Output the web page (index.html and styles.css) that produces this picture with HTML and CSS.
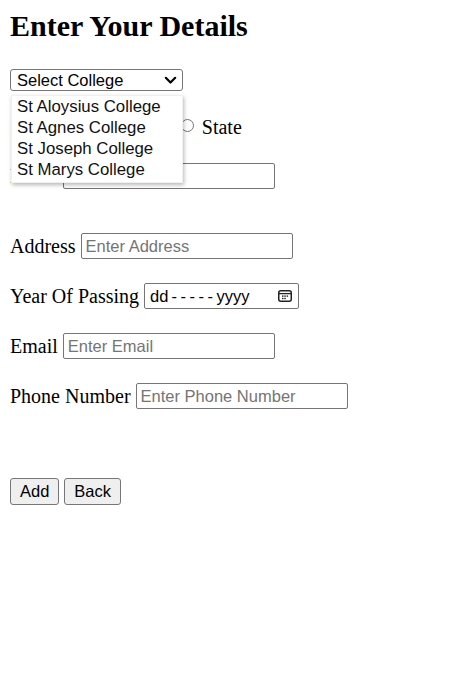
FILE: index.html
```html
<!DOCTYPE html>
<html lang="en">
<head>
<meta charset="utf-8">
<title>Enter Your Details</title>
<link rel="stylesheet" href="styles.css">
</head>
<body>
<h1 class="title">Enter Your Details</h1>
<form class="form">
  <div class="select-wrap">
    <select class="college">
      <option>Select College</option>
      <option>St Aloysius College</option>
      <option>St Agnes College</option>
      <option>St Joseph College</option>
      <option>St Marys College</option>
    </select>
    <svg class="chevron" width="13" height="9" viewBox="0 0 13 9" aria-hidden="true">
      <path d="M1.8 1.8 L6.5 6.5 L11.2 1.8" fill="none" stroke="#000" stroke-width="2.2" stroke-linecap="round" stroke-linejoin="round"/>
    </svg>
    <ul class="dropdown">
      <li class="dropdown-item">St Aloysius College</li>
      <li class="dropdown-item">St Agnes College</li>
      <li class="dropdown-item">St Joseph College</li>
      <li class="dropdown-item">St Marys College</li>
    </ul>
  </div>

  <div class="radio-row">Syllabus <input class="radio" type="radio" name="board"> Central <input class="radio radio-state" type="radio" name="board"> State</div>

  <div class="field field-name">
    <label class="label">Name</label>
    <input class="text-input" type="text" placeholder="Enter Name">
  </div>

  <div class="field field-address">
    <label class="label">Address</label>
    <input class="text-input" type="text" placeholder="Enter Address">
  </div>

  <div class="field">
    <label class="label">Year Of Passing</label>
    <div class="date-input">
      <span class="date-text">dd<span class="date-dashes">-----</span>yyyy</span>
      <svg class="cal-icon" width="14" height="12" viewBox="0 0 14 12" aria-hidden="true">
        <rect x="0.75" y="0.75" width="12.5" height="10.5" rx="2" fill="none" stroke="#222" stroke-width="1.5"/>
        <line x1="1" y1="3.6" x2="13" y2="3.6" stroke="#222" stroke-width="1.3"/>
        <rect x="4" y="5.4" width="1.5" height="1.4" fill="#222"/>
        <rect x="6.3" y="5.4" width="1.5" height="1.4" fill="#222"/>
        <rect x="8.6" y="5.4" width="1.5" height="1.4" fill="#222"/>
        <rect x="4" y="7.8" width="1.5" height="1.4" fill="#222"/>
        <rect x="6.3" y="7.8" width="1.5" height="1.4" fill="#222"/>
      </svg>
    </div>
  </div>

  <div class="field">
    <label class="label">Email</label>
    <input class="text-input" type="email" placeholder="Enter Email">
  </div>

  <div class="field">
    <label class="label">Phone Number</label>
    <input class="text-input" type="tel" placeholder="Enter Phone Number">
  </div>

  <div class="buttons">
    <button class="btn" type="button">Add</button>
    <button class="btn" type="button">Back</button>
  </div>
</form>
</body>
</html>
```
FILE: styles.css
```css
html, body {
  background: #fff;
}
body {
  margin: 0;
  padding: 0 10px;
  font-family: "Liberation Serif", "Times New Roman", serif;
  color: #000;
}
.title {
  margin: 8px 0 0;
  font-size: 30px;
  line-height: 36px;
  font-weight: bold;
}
.form {
  display: flex;
  flex-direction: column;
  align-items: flex-start;
  margin-top: 25px;
}
.select-wrap {
  position: relative;
  height: 22px;
}
.college {
  -webkit-appearance: none;
  -moz-appearance: none;
  appearance: none;
  box-sizing: border-box;
  width: 173px;
  height: 22px;
  margin: 0;
  padding: 0 20px 0 6px;
  font-family: "Liberation Sans", Arial, sans-serif;
  font-size: 16.5px;
  color: #000;
  background: #fff;
  border: 1px solid #767676;
  border-radius: 3px;
}
.chevron {
  position: absolute;
  left: 154px;
  top: 7px;
  pointer-events: none;
}
.dropdown {
  position: absolute;
  left: 1px;
  top: 26px;
  z-index: 10;
  box-sizing: border-box;
  width: 172px;
  height: 88px;
  margin: 0;
  padding: 0;
  list-style: none;
  background: #fff;
  border: 1px solid rgba(0, 0, 0, 0.06);
  box-shadow: 1px 2px 4px rgba(0, 0, 0, 0.28);
}
.dropdown-item {
  height: 21px;
  line-height: 21px;
  padding-left: 5px;
  font-family: "Liberation Sans", Arial, sans-serif;
  font-size: 16.8px;
  color: #111;
  white-space: nowrap;
}
.radio-row {
  margin-top: 23px;
  height: 26px;
  line-height: 26px;
  font-size: 20px;
}
.radio {
  width: 13px;
  height: 13px;
  margin: 3px 3px 0 5px;
  vertical-align: 2px;
}
.radio-state {
  margin-left: 7px;
}
.field {
  display: flex;
  align-items: center;
  gap: 5px;
  height: 26px;
  margin-top: 24px;
}
.field-name {
  margin-top: 23px;
}
.field-address {
  margin-top: 44px;
}
.label {
  font-size: 20px;
  white-space: nowrap;
}
.text-input {
  box-sizing: border-box;
  width: 212px;
  height: 26px;
  margin: 0;
  padding: 1px 4px;
  font-family: "Liberation Sans", Arial, sans-serif;
  font-size: 16.5px;
  color: #000;
  background: #fff;
  border: 1px solid #767676;
  border-radius: 2px;
}
.text-input::placeholder {
  color: #757575;
}
.date-input {
  box-sizing: border-box;
  display: flex;
  align-items: center;
  justify-content: space-between;
  width: 155px;
  height: 26px;
  padding: 0 6px 0 5px;
  background: #fff;
  border: 1px solid #767676;
  border-radius: 2px;
  font-family: "Liberation Sans", Arial, sans-serif;
  font-size: 16.5px;
  color: #000;
}
.date-text {
  white-space: nowrap;
}
.date-dashes {
  letter-spacing: 3.5px;
  margin-left: 3px;
}
.cal-icon {
  display: block;
  flex: none;
}
.buttons {
  display: flex;
  gap: 5px;
  margin-top: 69px;
}
.btn {
  box-sizing: border-box;
  height: 27px;
  margin: 0;
  padding: 0 9px;
  font-family: "Liberation Sans", Arial, sans-serif;
  font-size: 16.5px;
  color: #000;
  background: #efefef;
  border: 1px solid #767676;
  border-radius: 3px;
}
```
